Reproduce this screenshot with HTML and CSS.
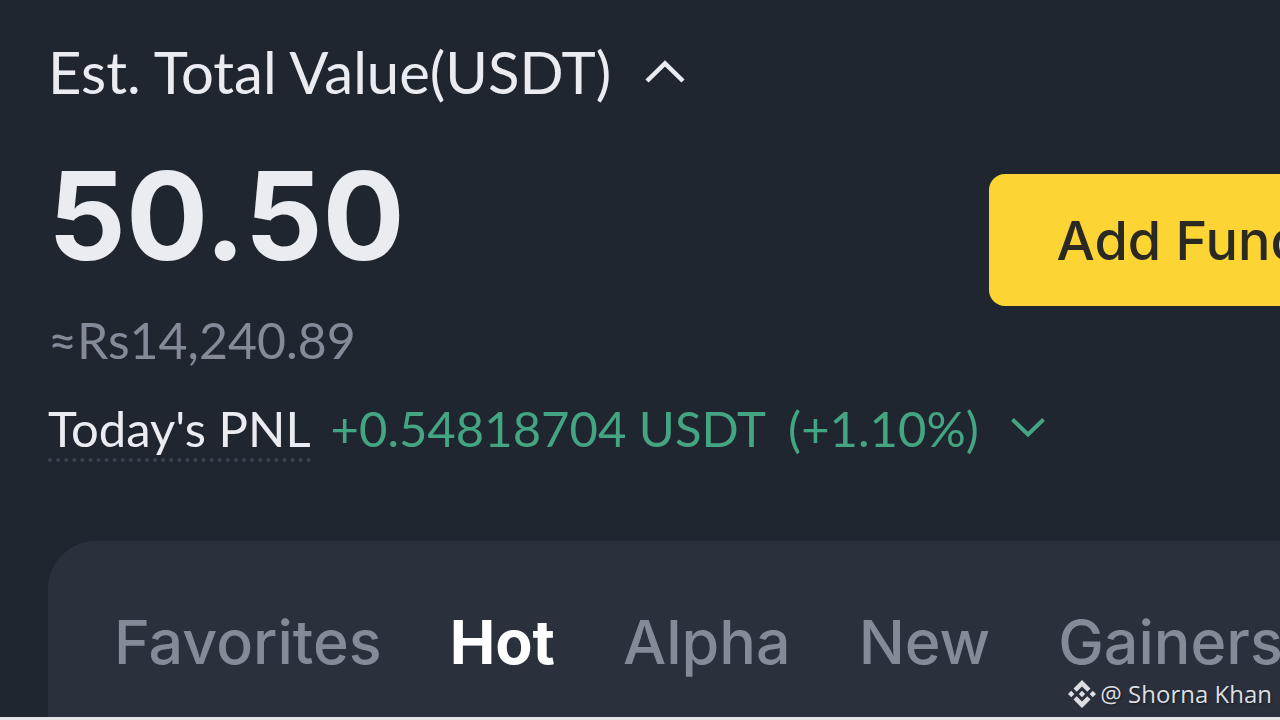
FILE: index.html
```html
<!DOCTYPE html>
<html lang="en">
<head>
  <meta charset="UTF-8">
  <meta name="viewport" content="width=device-width, initial-scale=1.0">
  <title>Wallet</title>
  <link rel="stylesheet" href="styles.css">
</head>
<body>
  <main class="wallet">
    <!-- Balance -->
    <section class="balance">
      <button class="balance__label" type="button" aria-expanded="true">
        <span>Est. Total Value(USDT)</span>
        <svg class="chevron" viewBox="0 0 40 24" width="40" height="24" fill="none" stroke="currentColor" stroke-width="4.500" aria-hidden="true">
          <path d="M2 21L20 3.500L38 21"></path>
        </svg>
      </button>
      <div class="balance__row">
        <p class="balance__amount">50.50</p>
        <button class="balance__btn" type="button">Add Funds</button>
      </div>
      <p class="balance__fiat">≈Rs14,240.89</p>
      <div class="pnl">
        <span class="pnl__label">Today's PNL</span>
        <button class="pnl__value" type="button">
          <span>+0.54818704 USDT</span>
          <span>(+1.10%)</span>
          <svg class="pnl__chevron" viewBox="0 0 34 20" width="34" height="20" fill="none" stroke="currentColor" stroke-width="4" aria-hidden="true">
            <path d="M1.500 1.500L17 16.500L32.500 1.500"></path>
          </svg>
        </button>
      </div>
    </section>

    <!-- Market tabs -->
    <section class="market">
      <nav class="tabs">
        <a class="tabs__item" href="#favorites">Favorites</a>
        <a class="tabs__item tabs__item--active" href="#hot">Hot</a>
        <a class="tabs__item" href="#alpha">Alpha</a>
        <a class="tabs__item" href="#new">New</a>
        <a class="tabs__item" href="#gainers">Gainers</a>
      </nav>
    </section>
  </main>

  <div class="author">
    <svg viewBox="0 0 28 28" width="28" height="28" fill="currentColor" aria-hidden="true">
      <path d="M14 0L22.500 8.500L19.300 11.700L14 6.400L8.700 11.700L5.500 8.500Z"></path>
      <path d="M14 28L22.500 19.500L19.300 16.300L14 21.600L8.700 16.300L5.500 19.500Z"></path>
      <path d="M14 10.800L17.200 14L14 17.200L10.800 14Z"></path>
      <path d="M3.200 10.800L6.400 14L3.200 17.200L0 14Z"></path>
      <path d="M24.800 10.800L28 14L24.800 17.200L21.600 14Z"></path>
    </svg>
    <span>@ Shorna Khan</span>
  </div>
</body>
</html>
```

FILE: styles.css
```css
:root {
  --bg: #202630;
  --card: #2b313c;
  --text: #eaecf1;
  --muted: #848a98;
  --green: #44a582;
  --yellow: #fcd434;
}
* {
  box-sizing: border-box;
}
body {
  margin: 0;
  background: var(--bg);
  color: var(--text);
  font-family: Lato, sans-serif;
  overflow: hidden;
}
p {
  margin: 0;
}
button {
  border: none;
  padding: 0;
  background: none;
  color: inherit;
  font: inherit;
  cursor: pointer;
}
.wallet {
  display: flex;
  flex-direction: column;
  height: 100vh;
  padding: 38px 0 0 48px;
  border-bottom: 3px solid #e4e5e8;
}
/* Balance */
.balance__label {
  display: flex;
  align-items: center;
  gap: 34px;
  font-size: 58px;
  line-height: 68px;
}
.balance__row {
  display: flex;
  justify-content: space-between;
  align-items: flex-start;
  margin-top: 34px;
}
.balance__amount {
  font-family: Inter, sans-serif;
  font-size: 122px;
  font-weight: 700;
  line-height: 152px;
}
/* The button runs past the right edge */
.balance__btn {
  flex: none;
  height: 132px;
  padding: 0 68px;
  margin-top: 34px;
  margin-right: -121px;
  border-radius: 16px;
  background: var(--yellow);
  color: #2b2a22;
  font-family: Inter, sans-serif;
  font-size: 54px;
  font-weight: 500;
}
.balance__fiat {
  margin-top: 2px;
  color: var(--muted);
  font-size: 50px;
  line-height: 64px;
}
.pnl {
  display: flex;
  align-items: flex-start;
  gap: 20px;
  margin-top: 26px;
  font-size: 49px;
  line-height: 60px;
}
.pnl__label {
  border-bottom: 4px dotted #3d434e;
}
.pnl__value {
  display: flex;
  align-items: center;
  gap: 22px;
  color: var(--green);
}
.pnl__chevron {
  margin-left: 10px;
}
/* Market tabs */
.market {
  flex: 1;
  margin-top: 79px;
  padding: 64px 0 0 66px;
  border-radius: 48px 0 0 0;
  background: var(--card);
}
.tabs {
  display: flex;
  gap: 68px;
  font-family: Inter, sans-serif;
  font-size: 61px;
  line-height: 74px;
}
.tabs__item {
  color: var(--muted);
  font-weight: 500;
  text-decoration: none;
}
.tabs__item--active {
  color: #fff;
  font-weight: 700;
}
/* Author tag over the bottom right corner */
.author {
  position: absolute;
  right: 8px;
  bottom: 8px;
  display: flex;
  align-items: center;
  gap: 4px;
  color: #dcdee2;
  font-family: "Open Sans", sans-serif;
  font-size: 24px;
  line-height: 36px;
  text-shadow: 1px 1px 2px rgba(0, 0, 0, 0.5);
}
```
